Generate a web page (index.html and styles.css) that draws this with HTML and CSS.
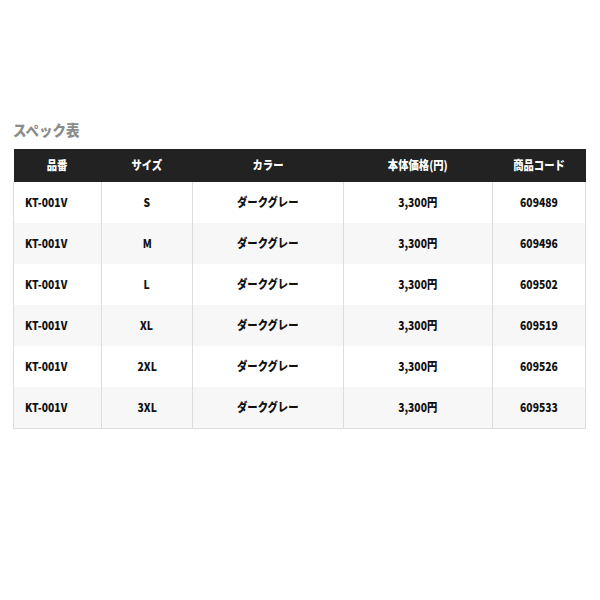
FILE: index.html
```html
<!DOCTYPE html>
<html lang="ja">
<head>
<meta charset="utf-8">
<link rel="stylesheet" href="styles.css">
</head>
<body>
<div class="page">
  <h2 class="title"><span class="sq">スペック表</span></h2>
  <table class="spec">
    <colgroup>
      <col class="c1"><col class="c2"><col class="c3"><col class="c4"><col class="c5">
    </colgroup>
    <thead>
      <tr><th><span class="sq">品番</span></th><th><span class="sq">サイズ</span></th><th><span class="sq">カラー</span></th><th><span class="sq">本体価格(円)</span></th><th><span class="sq">商品コード</span></th></tr>
    </thead>
    <tbody>
      <tr><td class="code"><span class="sq">KT-001V</span></td><td><span class="sq">S</span></td><td><span class="sq">ダークグレー</span></td><td><span class="sq">3,300円</span></td><td><span class="sq">609489</span></td></tr>
      <tr><td class="code"><span class="sq">KT-001V</span></td><td><span class="sq">M</span></td><td><span class="sq">ダークグレー</span></td><td><span class="sq">3,300円</span></td><td><span class="sq">609496</span></td></tr>
      <tr><td class="code"><span class="sq">KT-001V</span></td><td><span class="sq">L</span></td><td><span class="sq">ダークグレー</span></td><td><span class="sq">3,300円</span></td><td><span class="sq">609502</span></td></tr>
      <tr><td class="code"><span class="sq">KT-001V</span></td><td><span class="sq">XL</span></td><td><span class="sq">ダークグレー</span></td><td><span class="sq">3,300円</span></td><td><span class="sq">609519</span></td></tr>
      <tr><td class="code"><span class="sq">KT-001V</span></td><td><span class="sq">2XL</span></td><td><span class="sq">ダークグレー</span></td><td><span class="sq">3,300円</span></td><td><span class="sq">609526</span></td></tr>
      <tr><td class="code"><span class="sq">KT-001V</span></td><td><span class="sq">3XL</span></td><td><span class="sq">ダークグレー</span></td><td><span class="sq">3,300円</span></td><td><span class="sq">609533</span></td></tr>
    </tbody>
  </table>
</div>
</body>
</html>
```
FILE: styles.css
```css
html, body {
  margin: 0;
  padding: 0;
  background: #fff;
}
body {
  font-family: "Noto Sans CJK JP", "Noto Sans", sans-serif;
  color: #111;
}
.page {
  padding: 119px 0 0 13px;
}
.sq {
  display: inline-block;
  transform: scaleX(0.86);
}
.title {
  margin: 0 0 8px 0;
  font-size: 15px;
  line-height: 22px;
  font-weight: 900;
  color: #8c8c8c;
}
.title .sq {
  transform-origin: left center;
  transform: scaleX(0.9);
}
.spec {
  width: 572px;
  table-layout: fixed;
  border-collapse: collapse;
  font-size: 12px;
  font-weight: 900;
}
.c1 { width: 88px; }
.c2 { width: 91px; }
.c3 { width: 151px; }
.c4 { width: 149px; }
.c5 { width: 93px; }
.spec th {
  background: #222;
  color: #fff;
  height: 33px;
  padding: 0 0 2px 0;
  box-sizing: border-box;
  text-align: center;
  font-weight: 900;
  border: 0;
}
.spec td {
  height: 41px;
  padding: 0 0 2px 0;
  box-sizing: border-box;
  text-align: center;
  border-left: 1px solid #ddd;
  border-right: 1px solid #ddd;
  color: #111;
}
.spec td.code {
  text-align: left;
  padding-left: 11px;
}
.spec td.code .sq {
  transform-origin: left center;
}
.spec tbody tr:nth-child(even) td {
  background: #f7f7f7;
}
.spec tbody tr:last-child td {
  border-bottom: 1px solid #ddd;
}
```
